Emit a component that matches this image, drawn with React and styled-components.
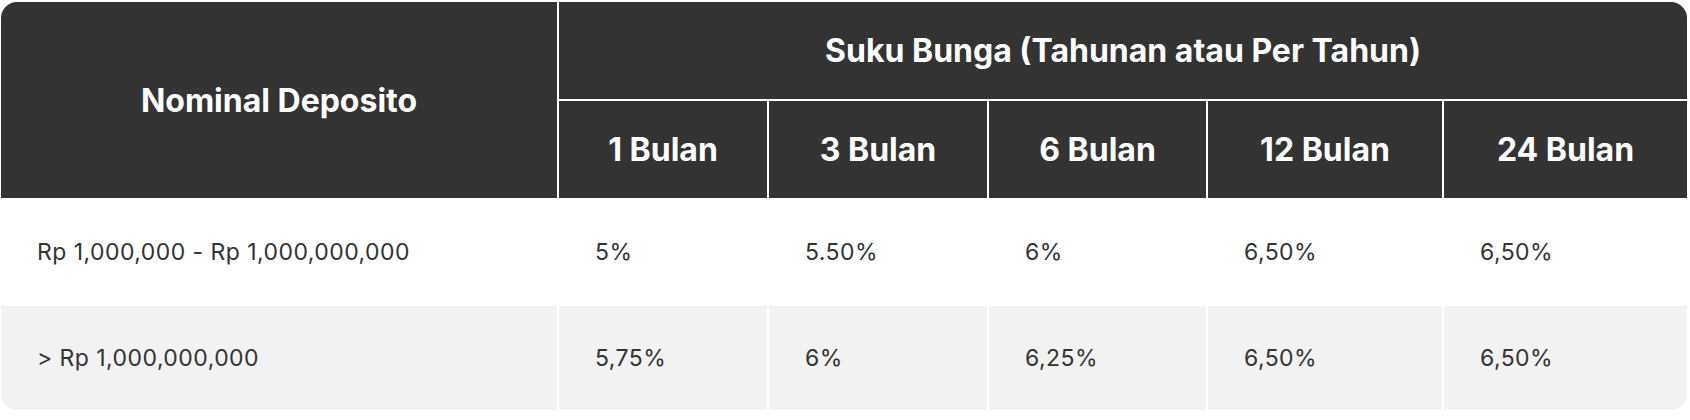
import React from "react";
import styled, { createGlobalStyle } from "styled-components";

const GlobalStyle = createGlobalStyle`
  html, body {
    margin: 0;
    padding: 0;
    background: #ffffff;
  }
  body {
    font-family: Inter, "Noto Sans", "Liberation Sans", sans-serif;
  }
`;

const tenors = ["1 Bulan", "3 Bulan", "6 Bulan", "12 Bulan", "24 Bulan"];

const rows = [
  {
    nominal: "Rp 1,000,000 - Rp 1,000,000,000",
    rates: ["5%", "5.50%", "6%", "6,50%", "6,50%"],
  },
  {
    nominal: "> Rp 1,000,000,000",
    rates: ["5,75%", "6%", "6,25%", "6,50%", "6,50%"],
  },
];

const App = () => {
  return (
    <>
      <GlobalStyle />
      <Page>
        <Table>
          <HeadCell $rowSpan={2}>Nominal Deposito</HeadCell>
          <HeadCell $colSpan={5}>Suku Bunga (Tahunan atau Per Tahun)</HeadCell>
          {tenors.map((t) => (
            <HeadCell key={t}>{t}</HeadCell>
          ))}
          {rows.map((row, i) => (
            <React.Fragment key={row.nominal}>
              <BodyCell $striped={i % 2 === 1}>{row.nominal}</BodyCell>
              {row.rates.map((r, j) => (
                <BodyCell key={j} $striped={i % 2 === 1}>
                  {r}
                </BodyCell>
              ))}
            </React.Fragment>
          ))}
        </Table>
      </Page>
    </>
  );
};

const Page = styled.div`
  padding: 2px 3px 10px 1px;
`;

const Table = styled.div`
  display: grid;
  grid-template-columns: 556px 208px 218px 217px 234px 243px;
  grid-template-rows: 97px 97px 104px 104px;
  gap: 2px;
  background: #ffffff;
  border-radius: 16px;
  overflow: hidden;
`;

const HeadCell = styled.div`
  grid-row: span ${(p) => p.$rowSpan || 1};
  grid-column: span ${(p) => p.$colSpan || 1};
  display: flex;
  align-items: center;
  justify-content: center;
  background: #333333;
  color: #ffffff;
  font-size: 32px;
  font-weight: 700;
`;

const BodyCell = styled.div`
  display: flex;
  align-items: center;
  padding-left: 36px;
  background: ${(p) => (p.$striped ? "#f2f2f2" : "#ffffff")};
  color: #333333;
  font-size: 23px;
  font-weight: 400;
  letter-spacing: 0.45px;
`;

export default App;
